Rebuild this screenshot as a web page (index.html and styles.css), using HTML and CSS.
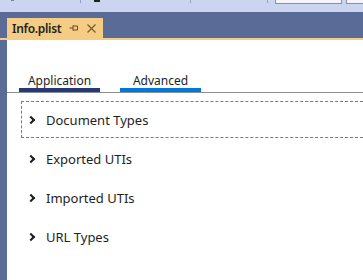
FILE: index.html
```html
<!DOCTYPE html>
<html lang="en">

<head>
    <meta charset="UTF-8">
    <meta name="viewport" content="width=device-width, initial-scale=1.0">
    <title>Info.plist</title>
    <link rel="stylesheet" href="styles.css">
</head>

<body>
    <div class="toolbar">
        <span class="tool-mark"></span>
        <span class="tool-sep sep-1"></span>
        <span class="tool-dark"></span>
        <span class="tool-sep sep-2"></span>
        <span class="tool-sep sep-3"></span>
        <span class="tool-box box-1"></span>
        <span class="tool-box box-2"></span>
    </div>

    <div class="doc-well">
        <div class="doc-tab">
            <span class="doc-title">Info.plist</span>
            <svg class="pin" width="10" height="8" viewBox="0 0 10 8">
                <path d="M0.5 4H4 M4 1.5V6.5 M4 2H8.5V6H4" fill="none" stroke="#6b4a1c" stroke-width="1" />
            </svg>
            <svg class="close" width="9" height="9" viewBox="0 0 9 9">
                <path d="M0.5 0.5L8.5 8.5 M8.5 0.5L0.5 8.5" fill="none" stroke="#7a5a30" stroke-width="1.2" />
            </svg>
        </div>
    </div>

    <div class="editor">
        <div class="tabs">
            <div class="tab tab-active">Application</div>
            <div class="tab tab-hover">Advanced</div>
        </div>

        <ul class="sections">
            <li class="section focused"><span class="chevron"></span>Document Types</li>
            <li class="section"><span class="chevron"></span>Exported UTIs</li>
            <li class="section"><span class="chevron"></span>Imported UTIs</li>
            <li class="section"><span class="chevron"></span>URL Types</li>
        </ul>
    </div>
</body>

</html>
```

FILE: styles.css
```css
/* Reset default */
body,
ul,
li {
    margin: 0;
    padding: 0;
    box-sizing: border-box;
}

body {
    font-family: "Noto Sans", "Segoe UI", sans-serif;
    background-color: #5b6b98;
    width: 363px;
    height: 280px;
    overflow: hidden;
    display: flex;
    flex-direction: column;
}

/* Top toolbar strip */
.toolbar {
    height: 12px;
    background-color: #ccd5f0;
    position: relative;
    flex-shrink: 0;
}

.tool-sep {
    position: absolute;
    top: 0;
    width: 1px;
    height: 3px;
    background-color: #95a2c8;
}

.sep-1 { left: 80px; }
.sep-2 { left: 190px; }
.sep-3 { left: 267px; }

.tool-mark {
    position: absolute;
    left: 11px;
    top: 0;
    width: 3px;
    height: 1px;
    background-color: #7380a8;
}

.tool-dark {
    position: absolute;
    left: 94px;
    top: 0;
    width: 6px;
    height: 2px;
    background-color: #222;
}

.tool-box {
    position: absolute;
    top: 0;
    height: 3px;
    background-color: #f4f5fa;
    border: 1px solid #8890a8;
    border-top: none;
}

.box-1 { left: 275px; width: 65px; }
.box-2 { left: 346px; width: 30px; }

/* Document tab well */
.doc-well {
    height: 28px;
    padding: 6px 0 0 7px;
    box-sizing: border-box;
    border-bottom: 2px solid #f5cc84;
    flex-shrink: 0;
}

.doc-tab {
    width: 96px;
    height: 20px;
    background-color: #f5cc84;
    display: flex;
    align-items: center;
    padding-left: 5px;
    box-sizing: border-box;
}

.doc-title {
    font-size: 12px;
    font-weight: 600;
    color: #1e1e1e;
    letter-spacing: -0.3px;
}

.pin {
    margin-left: 8px;
}

.close {
    margin-left: 8px;
}

/* Editor */
.editor {
    flex-grow: 1;
    margin-left: 7px;
    background-color: #fff;
    padding-top: 33px;
}

.tabs {
    display: flex;
    gap: 20px;
    padding-left: 12px;
    border-bottom: 1px solid #8c9096;
}

.tab {
    width: 81px;
    text-align: center;
    font-size: 12px;
    color: #1e1e1e;
    line-height: 15px;
    border-bottom: 4px solid transparent;
}

.tab-active {
    border-bottom-color: #253a74;
}

.tab-hover {
    border-bottom-color: #0078d7;
}

.sections {
    list-style-type: none;
    margin: 8px 0 0 14px;
    display: flex;
    flex-direction: column;
    gap: 2px;
}

.section {
    height: 37px;
    border: 1px dashed transparent;
    border-right: none;
    display: flex;
    align-items: center;
    padding-left: 6px;
    font-size: 13px;
    color: #1e1e1e;
}

.section.focused {
    border-color: #7a7a7a;
}

.chevron {
    width: 4px;
    height: 4px;
    border-top: 2px solid #1e1e1e;
    border-right: 2px solid #1e1e1e;
    transform: rotate(45deg);
    margin-right: 12px;
}
```
